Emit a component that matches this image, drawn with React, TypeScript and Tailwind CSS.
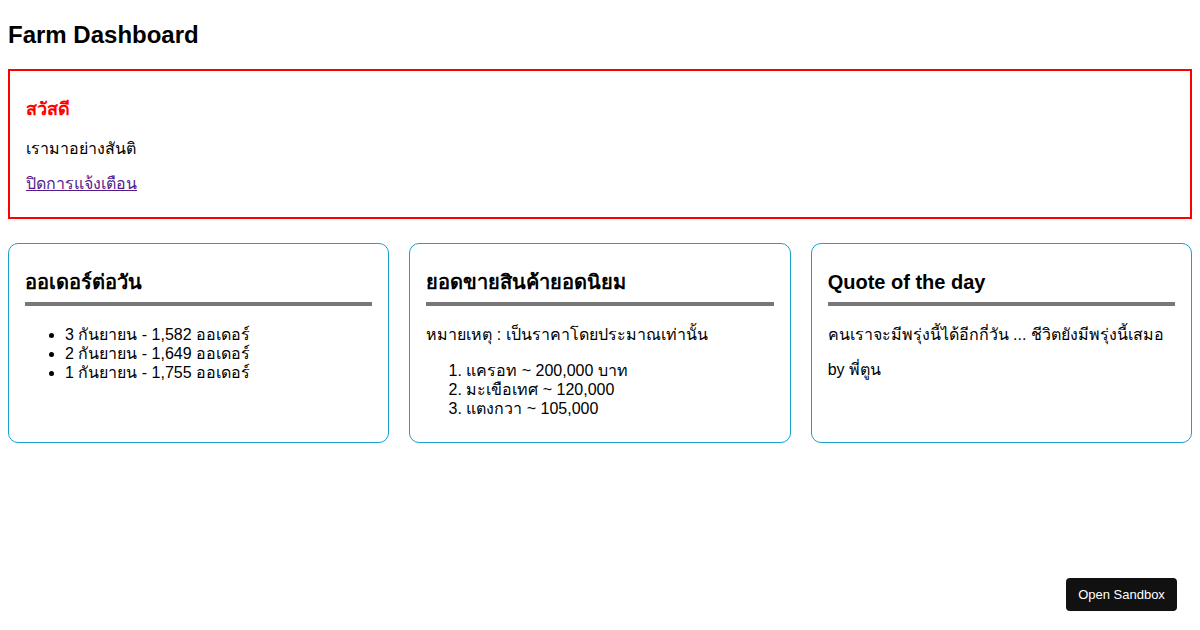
const orders = [
  '3 กันยายน - 1,582 ออเดอร์',
  '2 กันยายน - 1,649 ออเดอร์',
  '1 กันยายน - 1,755 ออเดอร์',
]

const topSellers = ['แครอท ~ 200,000 บาท', 'มะเขือเทศ ~ 120,000', 'แตงกวา ~ 105,000']

function Card({ title, children }: { title: string; children: React.ReactNode }) {
  return (
    <div className="border border-[#1a9fd0] rounded-[10px] px-4 pt-[23px] pb-[24px]">
      <h3 className="text-[20px] font-bold leading-[30px] text-black">{title}</h3>
      <div className="h-1 bg-[#777777] mt-[5px] mb-[19px]" />
      {children}
    </div>
  )
}

export default function App() {
  return (
    <div className="min-h-screen bg-white p-2 text-black" style={{ fontFamily: '"Liberation Sans", Arial, sans-serif' }}>
      <h1 className="text-2xl font-bold leading-8 mt-[11px]">Farm Dashboard</h1>

      <div className="border-2 border-[#ff0000] mt-[18px] px-4 pt-[25px] pb-[21px]">
        <h3 className="text-[18px] font-bold leading-[27px] text-[#ff0000]">สวัสดี</h3>
        <p className="text-base leading-6 mt-[14px]">เรามาอย่างสันติ</p>
        <a href="#" className="block w-fit text-base leading-6 mt-[11px] text-[#551a8b] underline">
          ปิดการแจ้งเตือน
        </a>
      </div>

      <div className="grid grid-cols-3 gap-5 mt-[24px]">
        <Card title="ออเดอร์ต่อวัน">
          <ul className="list-disc pl-10 text-base leading-[19px]">
            {orders.map((o) => (
              <li key={o}>{o}</li>
            ))}
          </ul>
        </Card>

        <Card title="ยอดขายสินค้ายอดนิยม">
          <p className="text-base leading-[19px]">หมายเหตุ : เป็นราคาโดยประมาณเท่านั้น</p>
          <ol className="list-decimal pl-10 text-base leading-[19px] mt-[17px]">
            {topSellers.map((t) => (
              <li key={t}>{t}</li>
            ))}
          </ol>
        </Card>

        <Card title="Quote of the day">
          <p className="text-base leading-[19px]">คนเราจะมีพรุ่งนี้ได้อีกกี่วัน ... ชีวิตยังมีพรุ่งนี้เสมอ</p>
          <p className="text-base leading-[19px] mt-4">by พี่ตูน</p>
        </Card>
      </div>

      <button className="fixed right-[23px] bottom-[19px] w-[111px] h-[33px] rounded bg-[#111111] text-white text-[13px]">
        Open Sandbox
      </button>
    </div>
  )
}
